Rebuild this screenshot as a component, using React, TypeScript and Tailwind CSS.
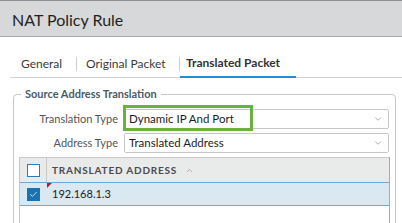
import { ChevronDown, ChevronUp, Check } from 'lucide-react';

const tabs = ['General', 'Original Packet', 'Translated Packet'];

const App = () => {
  return (
    <div className="w-[402px] h-[223px] overflow-hidden bg-white font-['Lato','Liberation_Sans',sans-serif] text-[#222]">
      <div className="h-[37px] bg-[#d7d8d9] border-t border-[#8e9092] border-b border-b-[#a8aaac] flex items-center pl-[12px] pt-[2px]">
        <h1 className="text-[16px] leading-none text-[#1f1f1f]">NAT Policy Rule</h1>
      </div>

      <div className="ml-[10px] mt-[13px] h-[28px] flex items-stretch border-b border-[#d3d3d3]">
        <div className="w-[66px] pl-[11px] flex items-center text-[12px] text-[#3a3a3a]">{tabs[0]}</div>
        <div className="w-px h-[14px] self-center bg-[#cfcfcf]" />
        <div className="w-[102px] pl-[9px] flex items-center text-[12px] text-[#3a3a3a]">{tabs[1]}</div>
        <div className="w-px h-[14px] self-center bg-[#cfcfcf]" />
        <div className="w-[116px] pl-[6px] flex items-center text-[12px] font-bold text-[#333] border-b-2 border-[#1b8fd8] -mb-px">
          {tabs[2]}
        </div>
      </div>

      <fieldset className="ml-[13px] mt-[9px] w-[383px] border border-[#c6c6c6] rounded-[4px] pb-[40px]">
        <legend className="ml-[7px] px-[4px] text-[11px] font-bold text-[#4b5a69] leading-[14px]">
          Source Address Translation
        </legend>

        <div className="mt-[8px] flex flex-col gap-[4px]">
          <div className="flex items-center">
            <div className="w-[104px] text-right text-[11px] text-[#555]">Translation Type</div>
            <div className="relative ml-[6px] w-[265px] h-[20px] border border-[#c8c8c8] rounded-[2px] flex items-center pl-[4px] text-[11.5px] text-[#1c1c1c]">
              Dynamic IP And Port
              <ChevronDown className="absolute right-[5px] top-[4px] w-[10px] h-[10px] text-[#777]" strokeWidth={1.5} />
              <div className="absolute -left-[2px] -top-[5px] w-[130px] h-[26px] border-[3px] border-[#6ab23e]" />
            </div>
          </div>
          <div className="flex items-center">
            <div className="w-[104px] text-right text-[11px] text-[#555]">Address Type</div>
            <div className="relative ml-[6px] w-[265px] h-[20px] border border-[#c8c8c8] rounded-[2px] flex items-center pl-[4px] text-[11.5px] text-[#1c1c1c]">
              Translated Address
              <ChevronDown className="absolute right-[5px] top-[4px] w-[10px] h-[10px] text-[#777]" strokeWidth={1.5} />
            </div>
          </div>
        </div>

        <div className="mt-[4px] ml-[5px] w-[371px] border-l border-r border-l-[#c6c6c6] border-r-[#a9a9a9] h-[80px]">
          <div className="h-[25px] flex bg-[#e9eaea] border-t border-[#c9c9c9]">
            <div className="w-[27px] flex items-center justify-center border-r border-[#c9c9c9]">
              <div className="w-[13px] h-[13px] border-[1.5px] border-[#2b7cb8] bg-white" />
            </div>
            <div className="flex items-center pl-[5px] text-[10px] font-bold tracking-[0.8px] text-[#4a4a4a]">
              TRANSLATED ADDRESS
              <ChevronUp className="ml-[8px] w-[9px] h-[9px] text-[#888]" strokeWidth={1.5} />
            </div>
          </div>
          <div className="h-[24px] flex bg-[#d9e8f1] border-t border-b border-[#6fa9d3]">
            <div className="w-[27px] flex items-center justify-center">
              <div className="w-[13px] h-[13px] bg-[#1a72ae] flex items-center justify-center">
                <Check className="w-[9px] h-[9px] text-white" strokeWidth={2} />
              </div>
            </div>
            <div className="relative flex items-center pl-[5px] text-[11px] text-[#1c1c1c]">
              <div className="absolute left-0 top-0 w-0 h-0 border-t-[5px] border-r-[5px] border-t-[#c4161c] border-r-transparent" />
              192.168.1.3
            </div>
          </div>
        </div>
      </fieldset>
    </div>
  );
};

export default App;
